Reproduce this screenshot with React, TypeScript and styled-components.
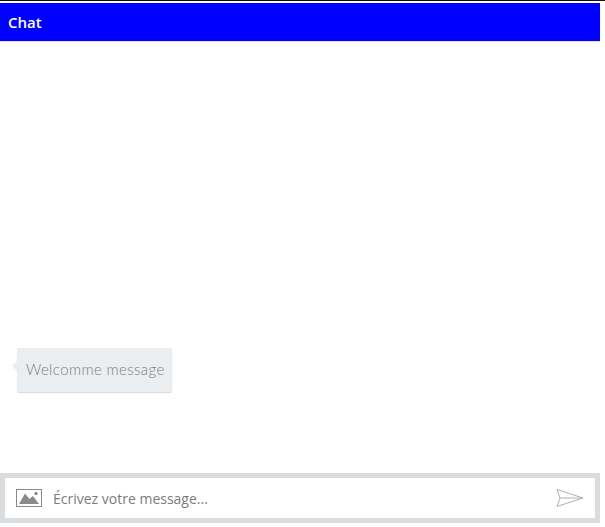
import { FC } from "react";
import styled, { createGlobalStyle } from "styled-components";

const GlobalStyle = createGlobalStyle`
  html, body {
    margin: 0;
    padding: 0;
    background: #fff;
  }
`;

const Page = styled.div`
  width: 605px;
  height: 527px;
  overflow: hidden;
  display: flex;
  flex-direction: column;
  background: #fff;
`;

const TopStrip = styled.div`
  height: 1px;
  margin-bottom: 2px;
  background: #111;
`;

const ChatBox = styled.div`
  width: 600px;
  height: 520px;
  display: flex;
  flex-direction: column;
`;

const Header = styled.div`
  height: 38px;
  flex: none;
  display: flex;
  align-items: center;
  padding-left: 8px;
  background: #0000ff;
  box-shadow: 0 1px 1px rgba(0, 0, 0, 0.12);
  color: #fff;
  font-family: "Open Sans", sans-serif;
  font-size: 15px;
  font-weight: 600;
`;

const Messages = styled.div`
  flex: 1;
  display: flex;
  flex-direction: column;
  justify-content: flex-end;
  padding: 0 0 81px 17px;
`;

const Bubble = styled.div`
  position: relative;
  align-self: flex-start;
  box-sizing: border-box;
  width: 155px;
  height: 44px;
  display: flex;
  align-items: center;
  padding: 0 0 2px 9px;
  border-radius: 2px;
  background: #ebeef0;
  box-shadow: 0 1px 1px rgba(0, 0, 0, 0.16);
  color: #7d7d7d;
  font-family: Lato, sans-serif;
  font-size: 15px;
  font-weight: 300;
  letter-spacing: 0.4px;
  white-space: nowrap;

  &::before {
    content: "";
    position: absolute;
    left: -5px;
    top: 13px;
    border-top: 5px solid transparent;
    border-bottom: 5px solid transparent;
    border-right: 5px solid #ebeef0;
  }
`;

const InputBar = styled.div`
  height: 40px;
  flex: none;
  display: flex;
  align-items: center;
  border: 5px solid #dadde0;
  background: #fff;
`;

const ImageButton = styled.div`
  width: 26px;
  height: 18px;
  flex: none;
  margin: 0 11px;
  display: flex;
`;

const MessageInput = styled.input`
  flex: 1;
  min-width: 0;
  border: none;
  outline: none;
  padding: 0;
  background: transparent;
  font-family: "Open Sans", sans-serif;
  font-size: 14px;
  color: #777;

  &::placeholder {
    color: #7c7c7c;
    opacity: 1;
  }
`;

const SendButton = styled.div`
  width: 28px;
  height: 18px;
  flex: none;
  margin-right: 11px;
  display: flex;
`;

const ImageIcon: FC = () => (
  <svg width="26" height="18" viewBox="0 0 26 18">
    <rect x="0.5" y="0.5" width="25" height="17" fill="#fff" stroke="#8a8a8a" />
    <path d="M3 15 L9 4.5 L13.5 10 L17 7 L23 15 Z" fill="#8a8a8a" />
    <circle cx="20" cy="4.5" r="1.7" fill="#8a8a8a" />
  </svg>
);

const SendIcon: FC = () => (
  <svg width="28" height="18" viewBox="0 0 28 18">
    <path d="M1 0.5 L27 9 L1 17.5 L4 9 Z M4 9 L27 9" fill="none" stroke="#b0b0b0" strokeWidth="1" strokeLinejoin="round" />
  </svg>
);

const App: FC = () => (
  <>
    <GlobalStyle />
    <Page>
      <TopStrip />
      <ChatBox>
        <Header>Chat</Header>
        <Messages>
          <Bubble>Welcomme message</Bubble>
        </Messages>
        <InputBar>
          <ImageButton>
            <ImageIcon />
          </ImageButton>
          <MessageInput placeholder="Écrivez votre message..." />
          <SendButton>
            <SendIcon />
          </SendButton>
        </InputBar>
      </ChatBox>
    </Page>
  </>
);

export default App;
